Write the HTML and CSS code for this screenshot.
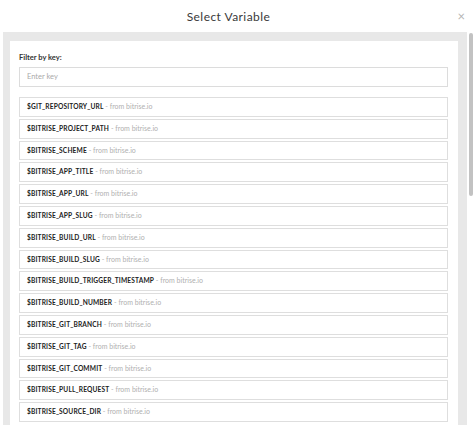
FILE: index.html
```html
<!DOCTYPE html>
<html>
<head>
<meta charset="utf-8">
<link rel="stylesheet" href="styles.css">
</head>
<body>
<div class="modal">
  <header class="head">
    <h1 class="title">Select Variable</h1>
    <span class="close">×</span>
  </header>
  <div class="body">
    <div class="panel">
      <div class="card">
        <label class="label">Filter by key:</label>
        <div class="input">Enter key</div>
        <ul class="list">
          <li class="row"><b>$GIT_REPOSITORY_URL</b><span class="src"> - from bitrise.io</span></li>
          <li class="row"><b>$BITRISE_PROJECT_PATH</b><span class="src"> - from bitrise.io</span></li>
          <li class="row"><b>$BITRISE_SCHEME</b><span class="src"> - from bitrise.io</span></li>
          <li class="row"><b>$BITRISE_APP_TITLE</b><span class="src"> - from bitrise.io</span></li>
          <li class="row"><b>$BITRISE_APP_URL</b><span class="src"> - from bitrise.io</span></li>
          <li class="row"><b>$BITRISE_APP_SLUG</b><span class="src"> - from bitrise.io</span></li>
          <li class="row"><b>$BITRISE_BUILD_URL</b><span class="src"> - from bitrise.io</span></li>
          <li class="row"><b>$BITRISE_BUILD_SLUG</b><span class="src"> - from bitrise.io</span></li>
          <li class="row"><b>$BITRISE_BUILD_TRIGGER_TIMESTAMP</b><span class="src"> - from bitrise.io</span></li>
          <li class="row"><b>$BITRISE_BUILD_NUMBER</b><span class="src"> - from bitrise.io</span></li>
          <li class="row"><b>$BITRISE_GIT_BRANCH</b><span class="src"> - from bitrise.io</span></li>
          <li class="row"><b>$BITRISE_GIT_TAG</b><span class="src"> - from bitrise.io</span></li>
          <li class="row"><b>$BITRISE_GIT_COMMIT</b><span class="src"> - from bitrise.io</span></li>
          <li class="row"><b>$BITRISE_PULL_REQUEST</b><span class="src"> - from bitrise.io</span></li>
          <li class="row"><b>$BITRISE_SOURCE_DIR</b><span class="src"> - from bitrise.io</span></li>
        </ul>
      </div>
    </div>
    <div class="scroll"><div class="thumb"></div></div>
  </div>
</div>
</body>
</html>
```
FILE: styles.css
```css
html, body {
  margin: 0;
  padding: 0;
  background: #fff;
  font-family: "Lato", "Liberation Sans", sans-serif;
}
.modal {
  width: 474px;
  height: 425px;
  overflow: hidden;
}
.head {
  height: 32px;
  display: flex;
  align-items: center;
  justify-content: center;
  position: relative;
  padding-right: 17px;
  box-sizing: border-box;
}
.title {
  margin: 0;
  font-size: 12px;
  font-weight: 400;
  color: #3a3a3a;
  letter-spacing: 0.45px;
}
.close {
  position: absolute;
  right: 9px;
  top: 8px;
  font-size: 13px;
  color: #b5b5b5;
}
.body {
  display: flex;
  height: 393px;
}
.panel {
  margin-left: 3px;
  width: 464px;
  flex: none;
  background: #e8e8e8;
  padding: 9px 9px 0 7px;
  box-sizing: border-box;
}
.card {
  background: #fff;
  height: 100%;
  padding: 12px 10px 0 9px;
  box-sizing: border-box;
}
.label {
  display: block;
  font-size: 7.5px;
  font-weight: 700;
  color: #333;
  height: 14px;
  line-height: 10px;
}
.input {
  height: 20px;
  border: 1px solid #dcdcdc;
  box-sizing: border-box;
  font-size: 7.5px;
  color: #aaa;
  line-height: 18px;
  padding-left: 7px;
  margin-bottom: 10px;
}
.list {
  list-style: none;
  margin: 0;
  padding: 0;
  display: flex;
  flex-direction: column;
  gap: 2px;
}
.row {
  height: 19.8px;
  border: 1px solid #dedede;
  box-sizing: border-box;
  padding-left: 7px;
  line-height: 17.8px;
  font-size: 6.6px;
  white-space: nowrap;
}
.row b {
  font-weight: 700;
  color: #222;
  letter-spacing: 0.15px;
}
.src {
  color: #b0b0b0;
  font-size: 7px;
}
.scroll {
  flex: none;
  width: 7px;
  padding-left: 2px;
}
.thumb {
  width: 4px;
  height: 163px;
  margin-top: 1px;
  background: #c2c2c2;
  border-radius: 2px;
}
```
